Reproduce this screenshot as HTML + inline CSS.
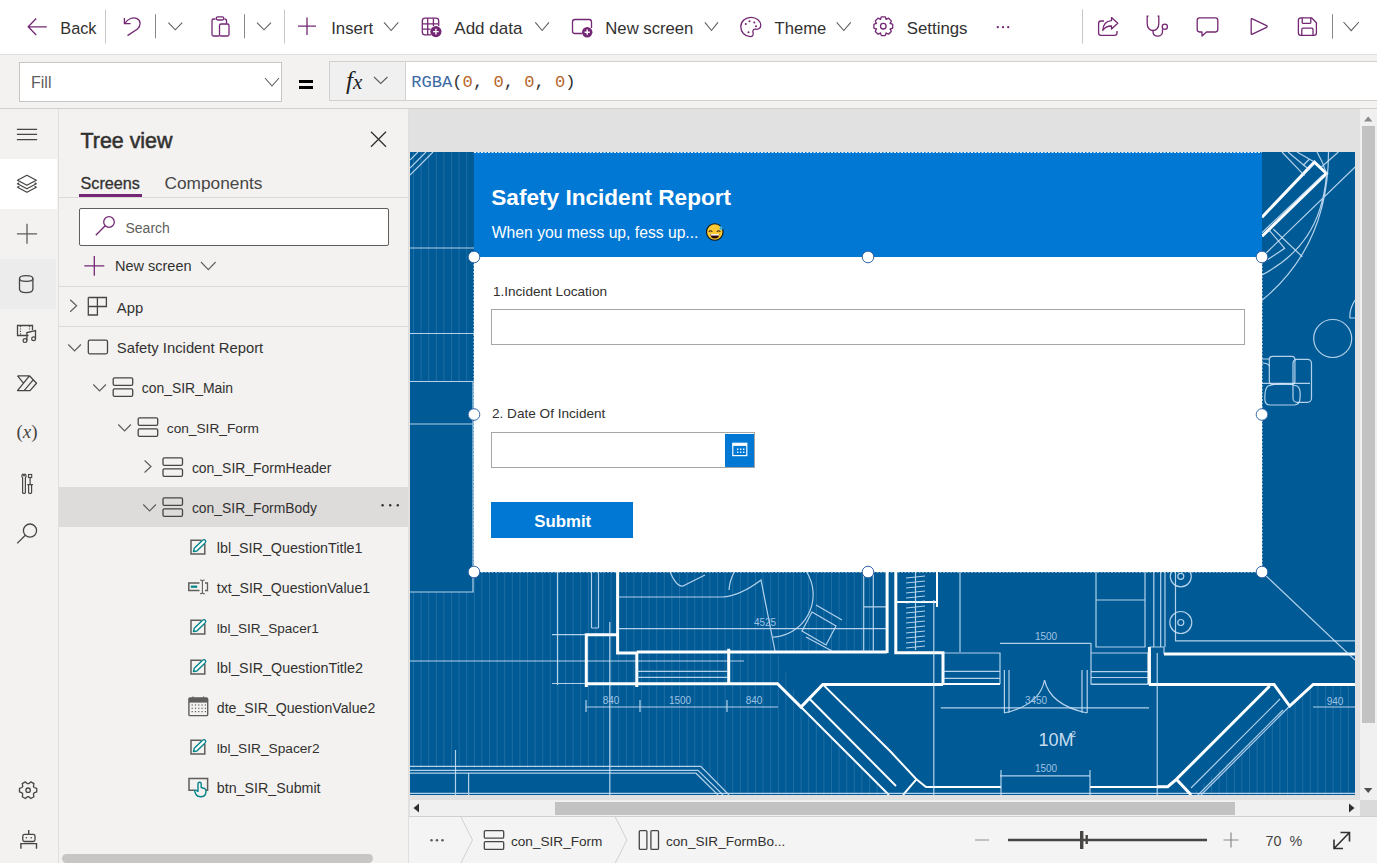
<!DOCTYPE html>
<html><head><meta charset="utf-8">
<style>
*{box-sizing:border-box}
html,body{margin:0;padding:0}
body{width:1377px;height:863px;overflow:hidden;position:relative;background:#fff;font-family:"Liberation Sans",sans-serif;color:#323130}
.a{position:absolute}
.t{position:absolute;white-space:nowrap;line-height:1}
svg.o{position:absolute;left:0;top:0;overflow:visible}
</style></head><body>

<div class="a" style="left:0px;top:0px;width:1377px;height:54px;background:#fff;"></div>
<div class="a" style="left:0px;top:54px;width:1377px;height:1px;background:#e1dfdd;"></div>
<svg class="o" width="1377" height="55"><path d="M28.5 26.8 H46.8 M36.2 18.5 L28.2 26.8 L36.2 35" fill="none" stroke="#742774" stroke-width="1.3"/><path d="M105.5 9.5 V43.5" stroke="#c8c6c4" stroke-width="1"/><path d="M124.4 18 V23.6 H130.6" fill="none" stroke="#742774" stroke-width="1.3"/><path d="M124.8 23.4 C128 18.5 133 16.8 137 18.6 C141 20.5 141 25.5 137.5 29 L127.5 35.6" fill="none" stroke="#742774" stroke-width="1.3"/><path d="M155.5 14.2 V38.3" stroke="#8a8886" stroke-width="1"/><path d="M168.4 22.7 L175.3 29.8 L182.2 22.7" fill="none" stroke="#605e5c" stroke-width="1.1"/><path d="M215.5 19 H213.5 Q212 19 212 20.5 V34.5 Q212 36 213.5 36 H219.5" fill="none" stroke="#742774" stroke-width="1.3"/><path d="M224.5 19 Q226.5 19 226.5 21 V23.8" fill="none" stroke="#742774" stroke-width="1.3"/><rect x="216.3" y="16.8" width="7.5" height="3.2" rx="1.5" fill="none" stroke="#742774" stroke-width="1.3"/><rect x="219.5" y="24" width="9.5" height="12" rx="1.5" fill="none" stroke="#742774" stroke-width="1.3"/><path d="M244.5 14.2 V38.3" stroke="#8a8886" stroke-width="1"/><path d="M257 22.7 L264.0 29.8 L271 22.7" fill="none" stroke="#605e5c" stroke-width="1.1"/><path d="M284.5 9.5 V43.5" stroke="#c8c6c4" stroke-width="1"/><path d="M307 17.4 V35 M298 26.2 H316" stroke="#742774" stroke-width="1.3"/><path d="M384 22.4 L391.15 30.5 L398.3 22.4" fill="none" stroke="#605e5c" stroke-width="1.1"/><path d="M431 34.9 H425 Q422.3 34.9 422.3 32 V21 Q422.3 18.2 425 18.2 H436 Q438.7 18.2 438.7 21 V26" fill="none" stroke="#742774" stroke-width="1.3"/><path d="M427.7 18.2 V34.9 M433.4 18.2 V26 M422.3 23.8 H438.7 M422.3 29.1 H430.5" fill="none" stroke="#742774" stroke-width="1.3"/><circle cx="435.9" cy="31.6" r="5.6" fill="#742774"/><path d="M435.9 28.8 V34.4 M433.1 31.6 H438.7" stroke="#fff" stroke-width="1.4"/><path d="M535.3 22.4 L542.15 30.5 L549 22.4" fill="none" stroke="#605e5c" stroke-width="1.1"/><path d="M582 33.5 H575 Q572.5 33.5 572.5 31 V22 Q572.5 19.5 575 19.5 H589 Q591.5 19.5 591.5 22 V28" fill="none" stroke="#742774" stroke-width="1.3"/><circle cx="587.2" cy="32.2" r="5.2" fill="#742774"/><path d="M587.2 29.6 V34.8 M584.6 32.2 H589.8" stroke="#fff" stroke-width="1.4"/><path d="M704.9 22.4 L711.45 30.5 L718 22.4" fill="none" stroke="#605e5c" stroke-width="1.1"/><path d="M751 17.3 C756.5 17.3 760.8 21 760.8 25.3 C760.8 29 757.5 29.5 755.5 29.2 C753.5 29 752.3 30.5 753 32.5 C753.8 35 752.5 36.8 750 36.6 C744.5 36.3 740.8 32 740.8 26.8 C740.8 21.5 745.3 17.3 751 17.3 Z" fill="none" stroke="#742774" stroke-width="1.3"/><circle cx="745.8" cy="24" r="1.05" fill="#742774"/><circle cx="749.5" cy="21.3" r="1.05" fill="#742774"/><circle cx="754.3" cy="22.5" r="1.05" fill="#742774"/><circle cx="756" cy="26.3" r="1.05" fill="#742774"/><circle cx="748.5" cy="32.3" r="1.05" fill="#742774"/><path d="M836.7 22.4 L843.75 30.5 L850.8 22.4" fill="none" stroke="#605e5c" stroke-width="1.1"/><path d="M892.71 24.29 L892.71 28.11 L890.06 29.22 L890.21 28.84 L891.30 31.50 L888.60 34.20 L885.94 33.11 L886.32 32.96 L885.21 35.61 L881.39 35.61 L880.28 32.96 L880.66 33.11 L878.00 34.20 L875.30 31.50 L876.39 28.84 L876.54 29.22 L873.89 28.11 L873.89 24.29 L876.54 23.18 L876.39 23.56 L875.30 20.90 L878.00 18.20 L880.66 19.29 L880.28 19.44 L881.39 16.79 L885.21 16.79 L886.32 19.44 L885.94 19.29 L888.60 18.20 L891.30 20.90 L890.21 23.56 L890.06 23.18Z" fill="none" stroke="#742774" stroke-width="1.3" stroke-linejoin="round"/><circle cx="883.3" cy="26.2" r="2.8" fill="none" stroke="#742774" stroke-width="1.3"/><circle cx="997.8" cy="27.2" r="1.15" fill="#742774"/><circle cx="1003" cy="27.2" r="1.15" fill="#742774"/><circle cx="1008.2" cy="27.2" r="1.15" fill="#742774"/><path d="M1082.5 9.3 V43.6" stroke="#c8c6c4" stroke-width="1"/><path d="M1104 21 H1101 Q1098.6 21 1098.6 23.4 V33 Q1098.6 35.4 1101 35.4 H1114.6 Q1117 35.4 1117 33 V31" fill="none" stroke="#742774" stroke-width="1.3"/><path d="M1111.5 17.6 L1117.8 23.3 L1111.5 29 V26 C1107 26 1104.5 27.5 1102.8 30.5 C1103 24.5 1106.5 21 1111.5 20.6 Z" fill="none" stroke="#742774" stroke-width="1.3" stroke-linejoin="round"/><path d="M1148.5 16.2 H1147.2 V24 C1147.2 28 1150 30.5 1153 30.5 C1156 30.5 1158.8 28 1158.8 24 V16.2 H1157.5" fill="none" stroke="#742774" stroke-width="1.3"/><path d="M1153 30.5 V31.5 C1153 34.3 1155 36.1 1157.8 36.1 C1160.6 36.1 1162.5 34 1162.5 31.5 V29.2" fill="none" stroke="#742774" stroke-width="1.3"/><circle cx="1164.8" cy="26.8" r="2.6" fill="none" stroke="#742774" stroke-width="1.3"/><path d="M1199.5 17.8 H1215.5 Q1217.8 17.8 1217.8 20.2 V29.6 Q1217.8 32 1215.5 32 H1206.5 L1202 36 V32 H1199.5 Q1197.2 32 1197.2 29.6 V20.2 Q1197.2 17.8 1199.5 17.8 Z" fill="none" stroke="#742774" stroke-width="1.3" stroke-linejoin="round"/><path d="M1251.2 19.5 Q1251.2 18.2 1252.4 18.9 L1266.6 25.6 Q1267.8 26.6 1266.6 27.4 L1252.4 34.2 Q1251.2 34.8 1251.2 33.5 Z" fill="none" stroke="#742774" stroke-width="1.3" stroke-linejoin="round"/><path d="M1300.5 17.8 H1311.5 L1316.4 22.7 V33 Q1316.4 35.4 1314 35.4 H1300.8 Q1298.4 35.4 1298.4 33 V20.2 Q1298.4 17.8 1300.8 17.8 Z" fill="none" stroke="#742774" stroke-width="1.3" stroke-linejoin="round"/><path d="M1302.2 17.8 V22.5 Q1302.2 23.3 1303 23.3 H1310 Q1310.8 23.3 1310.8 22.5 V17.8 M1301.8 35.4 V29.5 Q1301.8 28.2 1303 28.2 H1311.8 Q1313 28.2 1313 29.5 V35.4" fill="none" stroke="#742774" stroke-width="1.3"/><path d="M1332.5 14.2 V38.7" stroke="#8a8886" stroke-width="1"/><path d="M1343.5 22 L1351.2 30.6 L1358.9 22" fill="none" stroke="#605e5c" stroke-width="1.1"/></svg>
<div class="a" style="left:0px;top:55px;width:1377px;height:53px;background:#f3f2f1;"></div>
<div class="a" style="left:0px;top:108px;width:1377px;height:1px;background:#d2d0ce;"></div>
<div class="a" style="left:19px;top:62px;width:263px;height:40px;background:#fff;border:1px solid #c8c6c4"></div>
<div class="a" style="left:329px;top:61px;width:77px;height:40px;background:#f0f0f0;border:1px solid #d2d0ce"></div>
<div class="a" style="left:405px;top:61px;width:972px;height:40px;background:#fff;border:1px solid #d2d0ce;border-right:none"></div>
<div class="a" style="left:299px;top:80px;width:14px;height:2.5px;background:#000;"></div>
<div class="a" style="left:299px;top:86px;width:14px;height:2.5px;background:#000;"></div>
<div class="a" style="left:0px;top:109px;width:58px;height:754px;background:#f3f2f1;"></div>
<div class="a" style="left:58px;top:109px;width:1px;height:754px;background:#e1dfdd;"></div>
<div class="a" style="left:0px;top:159px;width:57px;height:50px;background:#fff;"></div>
<div class="a" style="left:0px;top:259px;width:56px;height:50px;background:#ececec;"></div>
<div class="a" style="left:59px;top:109px;width:350px;height:754px;background:#f3f2f1;"></div>
<div class="a" style="left:59px;top:487px;width:350px;height:40px;background:#dedcdb;"></div>
<div class="a" style="left:408px;top:109px;width:1px;height:754px;background:#e1dfdd;"></div>
<div class="a" style="left:79px;top:194px;width:63px;height:3px;background:#742774;"></div>
<div class="a" style="left:59px;top:197px;width:350px;height:1px;background:#dcdad8;"></div>
<div class="a" style="left:79px;top:208px;width:310px;height:38px;background:#fff;border:1px solid #605e5c;border-radius:2px"></div>
<div class="a" style="left:59px;top:286px;width:350px;height:1px;background:#dcdad8;"></div>
<div class="a" style="left:59px;top:326px;width:350px;height:1px;background:#dcdad8;"></div>
<div class="a" style="left:62px;top:854px;width:311px;height:9px;background:#c8c6c4;border-radius:4.5px"></div>
<div class="a" style="left:409px;top:109px;width:968px;height:708px;background:#e1e1e1;"></div>
<svg class="o" width="1377" height="863" style="left:0;top:0"><defs><clipPath id="bpc"><rect x="410" y="152" width="945" height="643"/></clipPath><style>.w3{fill:none;stroke:#fff;stroke-width:3}.w2{fill:none;stroke:#fff;stroke-width:2}.t1{fill:none;stroke:rgba(210,230,250,0.85);stroke-width:1.2}.h{fill:none;stroke:rgba(200,225,250,0.15);stroke-width:1}</style></defs><rect x="410" y="152" width="945" height="643" fill="#005a95"/><g clip-path="url(#bpc)"><clipPath id="hc"><path d="M410 152 H474 V381 H410 Z M410 592 H474 V572 H872 V652 H777 L801 707 L890 795 H725 L700 768 H410 Z M1290 706 L1313 684 H1355 V795 H1191 Z"/></clipPath><path d="M413.5 152 V795 M421.1 152 V795 M428.7 152 V795 M436.3 152 V795 M443.9 152 V795 M451.5 152 V795 M459.1 152 V795 M466.7 152 V795 M474.3 152 V795 M481.9 152 V795 M489.5 152 V795 M497.1 152 V795 M504.7 152 V795 M512.3 152 V795 M519.9 152 V795 M527.5 152 V795 M535.1 152 V795 M542.7 152 V795 M550.3 152 V795 M557.9 152 V795 M565.5 152 V795 M573.1 152 V795 M580.7 152 V795 M588.3 152 V795 M595.9 152 V795 M603.5 152 V795 M611.1 152 V795 M618.7 152 V795 M626.3 152 V795 M633.9 152 V795 M641.5 152 V795 M649.1 152 V795 M656.7 152 V795 M664.3 152 V795 M671.9 152 V795 M679.5 152 V795 M687.1 152 V795 M694.7 152 V795 M702.3 152 V795 M709.9 152 V795 M717.5 152 V795 M725.1 152 V795 M732.7 152 V795 M740.3 152 V795 M747.9 152 V795 M755.5 152 V795 M763.1 152 V795 M770.7 152 V795 M778.3 152 V795 M785.9 152 V795 M793.5 152 V795 M801.1 152 V795 M808.7 152 V795 M816.3 152 V795 M823.9 152 V795 M831.5 152 V795 M839.1 152 V795 M846.7 152 V795 M854.3 152 V795 M861.9 152 V795 M869.5 152 V795 M877.1 152 V795 M884.7 152 V795 M892.3 152 V795 M899.9 152 V795 M907.5 152 V795 M915.1 152 V795 M922.7 152 V795 M930.3 152 V795 M937.9 152 V795 M945.5 152 V795 M953.1 152 V795 M960.7 152 V795 M968.3 152 V795 M975.9 152 V795 M983.5 152 V795 M991.1 152 V795 M998.7 152 V795 M1006.3 152 V795 M1013.9 152 V795 M1021.5 152 V795 M1029.1 152 V795 M1036.7 152 V795 M1044.3 152 V795 M1051.9 152 V795 M1059.5 152 V795 M1067.1 152 V795 M1074.7 152 V795 M1082.3 152 V795 M1089.9 152 V795 M1097.5 152 V795 M1105.1 152 V795 M1112.7 152 V795 M1120.3 152 V795 M1127.9 152 V795 M1135.5 152 V795 M1143.1 152 V795 M1150.7 152 V795 M1158.3 152 V795 M1165.9 152 V795 M1173.5 152 V795 M1181.1 152 V795 M1188.7 152 V795 M1196.3 152 V795 M1203.9 152 V795 M1211.5 152 V795 M1219.1 152 V795 M1226.7 152 V795 M1234.3 152 V795 M1241.9 152 V795 M1249.5 152 V795 M1257.1 152 V795 M1264.7 152 V795 M1272.3 152 V795 M1279.9 152 V795 M1287.5 152 V795 M1295.1 152 V795 M1302.7 152 V795 M1310.3 152 V795 M1317.9 152 V795 M1325.5 152 V795 M1333.1 152 V795 M1340.7 152 V795 M1348.3 152 V795" class="h" clip-path="url(#hc)"/><path d="M410 248 H474 M410 333.5 H474 M410 381.5 H473 V572 M410 424 H473" class="t1"/><path d="M410 160 L418 152 M410 168 L426 152 M410 175 L433 152" class="t1"/><path d="M410 592 H473 V572" class="t1"/><path d="M410 661 H744" class="t1"/><path d="M557.5 572 V685 M552 634.7 H586 M552 683.5 H586" class="t1"/><path d="M586.3 687 V634.7 H617.6 V572 M617.6 634.7 V653 H636.8 V687" class="w3"/><path d="M591.5 572 V628 M598.5 572 V628 M591.5 628 H598.5" class="t1"/><path d="M609.8 622 V795 M618 597 H722 Q740 596 761 580 L775 651 M618 628.6 H886" class="t1"/><path d="M636.8 652.1 H887 M728.7 648.7 V684" class="w3"/><path d="M637 671.3 H728 M637 677.4 H728" class="t1"/><path d="M806.7 572 A42.7 42.7 0 0 1 773 637.2 M734.3 572 A42.7 42.7 0 0 0 729 590" class="t1"/><path d="M863.7 572 V652 M873.3 572 V652 M863.7 606.8 H886" class="t1"/><path d="M812 612 L836 626 L826 645 L802 631 Z M816 605 L842 620 M806 637 L832 651" class="t1"/><path d="M670 572 Q678 590 685 585 L705 575" class="t1"/><path d="M887.1 572 V653 M895.8 572 V652.8 H943 V684" class="w3"/><path d="M937 572 V607 M897 602 H936" class="w2"/><path d="M906 578 L925 576 M906 583 L925 581 M906 588 L925 586 M906 593 L925 591 M906 598 L925 596 M906 603 L925 601 M906 608 L925 606 M906 613 L925 611 M906 618 L925 616 M906 623 L925 621 M906 628 L925 626 M906 633 L925 631 M906 638 L925 636 M906 643 L925 641 M906 648 L925 646 M915.5 572 V650" class="t1"/><path d="M943.4 653 H1000 V684 M943 671.3 H1000 M943 678.3 H1000 M960 572 V652" class="t1"/><path d="M943 684 H1000" class="w2"/><path d="M1000 643.4 H1090.7 M1091 643 V684 H1150 M1091 653 H1150 M1091 684.5 H1149" class="t1"/><path d="M1096 572 V600 H1145 V572 M1096 600 V647 H1145 V600" class="t1"/><path d="M1149.4 647 V684 M1164 653.9 H1355" class="w3"/><path d="M1149.4 647 H1164 V653.9 M1091 671.6 H1149 M1091 677.5 H1149" class="t1"/><path d="M1153.8 572 V647 M1160.7 572 V647 M1165 572 V647 M1175.5 572 V641 M1175 640.8 H1355" class="t1"/><circle cx="1180.8" cy="576.3" r="10.5" class="t1"/><circle cx="1180.8" cy="576.3" r="3" class="t1"/><circle cx="1180.8" cy="622.5" r="11" class="t1"/><circle cx="1180.8" cy="622.5" r="3" class="t1"/><path d="M1262 572 L1355 660" class="t1"/><path d="M586.3 683.8 H777.5 L801 707 L822.8 684.4 H943 M1149 684.4 H1274 L1289.7 706.1 L1313.2 684.4 H1355 M1149 653 V684" class="w3"/><path d="M586 707 H778 M586 700 V712 M640 700 V712 M727 700 V712" class="t1"/><path d="M801 707 L889 795 M809.7 699 L896 786 M822.8 684.4 L890 751 M890 751 L916.4 779.3 L903 795 M916.4 779.3 L926 787 H1001 M1090 787 H1157" class="w2"/><path d="M1001 770 V795 M1090 770 V795" class="t1"/><path d="M410 766.3 H700.8 L729 795 M410 770.3 H698 L723 795 M410 773.2 H696 L718 795" class="t1"/><path d="M455.5 750 V795 M468.6 773 V795 M410 793.3 H1355" class="t1"/><path d="M933.8 600 V795 M940.8 707.9 H1149 M1000 775.9 H1090" class="t1"/><path d="M1004.4 670 V713 M1087.2 670 V713 M1044.5 680 Q1040 705 1004 713 M1044.5 680 Q1050 705 1087 713 M1009 670 V713 M1082 670 V713" class="t1"/><path d="M1157.2 653 V795" class="t1"/><path d="M1269.7 686 L1176.4 779.3 L1191.2 795 M1157 786.7 H1167.7 L1176.4 779.3" class="w3"/><path d="M1289.7 706 L1201 795 M1280 699 L1191 788 M1283 710 L1196 797" class="t1"/><path d="M1313 707 H1355" class="t1"/><path d="M1262 217.2 L1314.4 162.1 L1326.4 173.4 L1262 236.3" class="w3"/><path d="M1262 232.6 L1322.8 175.2" class="t1"/><path d="M1282 152 L1304.5 175.6 M1288 152 L1309 169.5 M1297 152 L1314.4 162.1 M1303 165.5 L1309 159.5 M1307.5 170.5 L1313 165 M1338.4 152 L1321.4 167 M1317 152 Q1323 162 1326.4 173.4" class="t1"/><path d="M1328.5 152 C1328.5 215 1305 265 1262 300.3 M1326.4 176 C1322 225 1300 255 1262 274.9 M1355.6 166.6 L1262 257" class="t1"/><path d="M1269 230 L1284.7 248.3 L1267.7 259.6 M1273.4 229.3 L1302.3 256.8" class="t1"/><circle cx="1332.7" cy="338.5" r="19" class="t1"/><rect x="1269.3" y="356.3" width="25.6" height="28" rx="3" class="t1"/><rect x="1293" y="359.3" width="18.5" height="43" rx="4" class="t1"/><path d="M1268 386 Q1282 381 1297 386 Q1301 388 1300 398 Q1300 405 1294 405 H1270 Q1264.8 405 1264.8 399 Q1264.8 388 1268 386 Z" class="t1" fill="#005a95"/><path d="M1262 359 H1269.3 M1262 383.4 H1310 M1262 363 Q1268 363 1269.3 366" class="t1"/><path d="M1355 300 Q1349 310 1350 318 H1355" class="t1"/><text x="1038.4" y="746.2" font-size="18" fill="#c7dcef" font-family="Liberation Sans" >10M</text><text x="1071" y="737" font-size="9" fill="#c7dcef" font-family="Liberation Sans">2</text><text x="680" y="704" font-size="10" fill="#9fc2e3" font-family="Liberation Sans" text-anchor="middle">1500</text><text x="611" y="704" font-size="10" fill="#9fc2e3" font-family="Liberation Sans" text-anchor="middle">840</text><text x="754" y="704" font-size="10" fill="#9fc2e3" font-family="Liberation Sans" text-anchor="middle">840</text><text x="1046" y="640" font-size="10" fill="#9fc2e3" font-family="Liberation Sans" text-anchor="middle">1500</text><text x="1046" y="772" font-size="10" fill="#9fc2e3" font-family="Liberation Sans" text-anchor="middle">1500</text><text x="1036" y="704" font-size="10" fill="#9fc2e3" font-family="Liberation Sans" text-anchor="middle">3450</text><text x="1335" y="705" font-size="10" fill="#9fc2e3" font-family="Liberation Sans" text-anchor="middle">940</text><text x="765" y="626" font-size="10" fill="#9fc2e3" font-family="Liberation Sans" text-anchor="middle">4525</text></g></svg>
<div class="a" style="left:474px;top:152px;width:788px;height:105px;background:#0078d4;"></div>
<div class="a" style="left:474px;top:257px;width:788px;height:315px;background:#fff;"></div>
<svg class="o" width="1377" height="863"><circle cx="714.8" cy="232" r="8.3" fill="#fcc935" stroke="#111" stroke-width="1.1"/><path d="M708.8 232 Q710.5 229.5 712.3 232 M716.9 232 Q718.6 229.5 720.4 232" stroke="#3a2a10" stroke-width="1.1" fill="none"/><path d="M710.2 234 H719.4 Q719 238.6 714.8 238.6 Q710.6 238.6 710.2 234 Z" fill="#2a0a00"/><rect x="710.6" y="234" width="8.4" height="1.6" fill="#eee"/><path d="M721 225.3 Q723.3 228.3 722.6 229.5 Q721 230.7 719.6 229.3 Q719.2 228 721 225.3 Z" fill="#3cb0e0"/></svg>
<div class="a" style="left:491px;top:309px;width:754px;height:36px;background:#fff;border:1.5px solid #a6a6a6"></div>
<div class="a" style="left:491px;top:432px;width:264px;height:36px;background:#fff;border:1.5px solid #a6a6a6"></div>
<div class="a" style="left:725px;top:433.5px;width:28.5px;height:33px;background:#0078d4;"></div>
<svg class="o" width="1377" height="863"><rect x="732.8" y="443.3" width="14" height="12.3" fill="none" stroke="#fff" stroke-width="1.2"/><rect x="732.8" y="443.3" width="14" height="2.6" fill="#fff"/><rect x="737" y="448.5" width="1.4" height="1.4" fill="#fff"/><rect x="737" y="451.5" width="1.4" height="1.4" fill="#fff"/><rect x="740" y="448.5" width="1.4" height="1.4" fill="#fff"/><rect x="740" y="451.5" width="1.4" height="1.4" fill="#fff"/><rect x="743" y="448.5" width="1.4" height="1.4" fill="#fff"/><rect x="743" y="451.5" width="1.4" height="1.4" fill="#fff"/></svg>
<div class="a" style="left:491px;top:502px;width:142px;height:36px;background:#0078d4;"></div>
<svg class="o" width="1377" height="863"><path d="M474 152.5 H1262 M474 257 V572 H1262 V257" fill="none" stroke="rgba(255,255,255,0.9)" stroke-width="1" stroke-dasharray="2 1.5"/><circle cx="474" cy="257" r="5.8" fill="#fff" stroke="#3468a8" stroke-width="1"/><circle cx="868" cy="257" r="5.8" fill="#fff" stroke="#3468a8" stroke-width="1"/><circle cx="1262" cy="257" r="5.8" fill="#fff" stroke="#3468a8" stroke-width="1"/><circle cx="474" cy="414.5" r="5.8" fill="#fff" stroke="#3468a8" stroke-width="1"/><circle cx="1262" cy="414.5" r="5.8" fill="#fff" stroke="#3468a8" stroke-width="1"/><circle cx="474" cy="572" r="5.8" fill="#fff" stroke="#3468a8" stroke-width="1"/><circle cx="868" cy="572" r="5.8" fill="#fff" stroke="#3468a8" stroke-width="1"/><circle cx="1262" cy="572" r="5.8" fill="#fff" stroke="#3468a8" stroke-width="1"/></svg>
<div class="a" style="left:1360px;top:109px;width:17px;height:691px;background:#f0f0f0;"></div>
<div class="a" style="left:1362px;top:126px;width:13px;height:597px;background:#c2c2c2;"></div>
<div class="a" style="left:410px;top:800px;width:950px;height:16px;background:#f0f0f0;"></div>
<div class="a" style="left:555px;top:802px;width:680px;height:13px;background:#c2c2c2;"></div>
<div class="a" style="left:1360px;top:800px;width:17px;height:16px;background:#dadada;"></div>
<svg class="o" width="1377" height="863"><path d="M1364 121.5 L1368.2 116.5 L1372.4 121.5 Z" fill="#8a8a8a"/><path d="M1364 788 L1368.2 793 L1372.4 788 Z" fill="#505050"/><path d="M413.5 808 L419 803.5 V812.5 Z M1354.5 808 L1349 803.5 V812.5 Z" fill="#303030"/></svg>
<div class="a" style="left:409px;top:816px;width:968px;height:1px;background:#d2d0ce;"></div>
<div class="a" style="left:409px;top:817px;width:968px;height:46px;background:#f4f4f4;"></div>
<svg class="o" width="1377" height="863"><path d="M265 78 L272.0 86 L279 78" fill="none" stroke="#605e5c" stroke-width="1.1"/><path d="M374 77 L380.75 83.5 L387.5 77" fill="none" stroke="#605e5c" stroke-width="1.1"/><path d="M16.9 129.3 H37.1 M16.9 134.4 H37.1 M16.9 139.6 H37.1" stroke="#484644" stroke-width="1.3"/><path d="M26.9 175.3 L36.3 180.3 L26.9 185.3 L17.5 180.3 Z" fill="none" stroke="#484644" stroke-width="1.3" stroke-linejoin="round"/><path d="M19.2 182.8 L17.5 183.8 L26.9 188.8 L36.3 183.8 L34.6 182.8 M19.2 186.3 L17.5 187.3 L26.9 192.3 L36.3 187.3 L34.6 186.3" fill="none" stroke="#484644" stroke-width="1.3" stroke-linejoin="round"/><path d="M27 223.8 V243.7 M16.9 233.8 H37.1" stroke="#605e5c" stroke-width="1.3"/><path d="M19.5 278.5 V289 C19.5 291.2 22.5 292.6 26.2 292.6 C29.9 292.6 32.9 291.2 32.9 289 V278.5" fill="none" stroke="#484644" stroke-width="1.3"/><ellipse cx="26.2" cy="278.5" rx="6.7" ry="2.9" fill="none" stroke="#484644" stroke-width="1.3"/><path d="M28.5 335.5 H17.5 V325.5 H32.5 V330" fill="none" stroke="#484644" stroke-width="1.3"/><path d="M20.5 326 V335 M29.5 326 V330" stroke="#484644" stroke-width="1.1" stroke-dasharray="1.2 1.2"/><path d="M26.9 340.4 V332.5 L35.5 330.5 V338.5" fill="none" stroke="#484644" stroke-width="1.3"/><circle cx="25" cy="340.6" r="1.9" fill="none" stroke="#484644" stroke-width="1.2"/><circle cx="33.6" cy="338.7" r="1.9" fill="none" stroke="#484644" stroke-width="1.2"/><path d="M17.5 375.8 H29.4 L36.5 383.3 L30 390.6 H17.5 L29.4 375.8 M17.5 375.8 L23.5 383.1 M33.2 379.9 L24.1 390.6" fill="none" stroke="#484644" stroke-width="1.3" stroke-linejoin="round"/><path d="M22.6 477.8 C21.5 476.5 21.8 474.4 23.2 474.2 L24 476 L24.8 474.2 C26.2 474.4 26.5 476.5 25.4 477.8 V492.6 Q25.4 493.4 24.6 493.4 H23.4 Q22.6 493.4 22.6 492.6 Z" fill="none" stroke="#484644" stroke-width="1.2" stroke-linejoin="round"/><rect x="28.5" y="474.5" width="3.2" height="3" fill="none" stroke="#484644" stroke-width="1.1"/><path d="M30.1 477.5 V484.4 M27.3 484.6 H32.9 M28.6 484.6 V492.6 Q28.6 493.4 29.4 493.4 H30.8 Q31.6 493.4 31.6 492.6 V484.6" fill="none" stroke="#484644" stroke-width="1.2"/><circle cx="30" cy="530.6" r="6.6" fill="none" stroke="#484644" stroke-width="1.3"/><path d="M25.3 535.3 L17.2 543.4" stroke="#484644" stroke-width="1.3"/><path d="M36.72 788.45 L36.72 791.95 L34.13 792.89 L33.44 794.07 L33.93 796.79 L30.90 798.54 L28.78 796.76 L27.42 796.76 L25.30 798.54 L22.27 796.79 L22.76 794.07 L22.07 792.89 L19.48 791.95 L19.48 788.45 L22.07 787.51 L22.76 786.33 L22.27 783.61 L25.30 781.86 L27.42 783.64 L28.78 783.64 L30.90 781.86 L33.93 783.61 L33.44 786.33 L34.13 787.51Z" fill="none" stroke="#484644" stroke-width="1.3" stroke-linejoin="round"/><circle cx="28.1" cy="790.2" r="2.2" fill="none" stroke="#484644" stroke-width="1.3"/><path d="M28.7 830 V834 M20.9 848.7 V843.6 H36.5 V848.7" fill="none" stroke="#484644" stroke-width="1.4"/><rect x="22.8" y="834.3" width="12.2" height="7.2" rx="1.8" fill="none" stroke="#484644" stroke-width="1.3"/><circle cx="26.4" cy="837.8" r="0.8" fill="#484644"/><circle cx="31.2" cy="837.8" r="0.8" fill="#484644"/><path d="M371 131.8 L386 146.8 M386 131.8 L371 146.8" stroke="#323130" stroke-width="1.3"/><circle cx="109" cy="222" r="5.3" fill="none" stroke="#742774" stroke-width="1.3"/><path d="M105.2 225.8 L95.8 235.3" stroke="#742774" stroke-width="1.3"/><path d="M94.3 256 V275.7 M84.3 265.8 H104.3" stroke="#742774" stroke-width="1.3"/><path d="M201 262 L208.3 269.6 L215.6 262" fill="none" stroke="#605e5c" stroke-width="1.1"/><path d="M70.2 299.7 L76.60000000000001 305.7 L70.2 311.7" fill="none" stroke="#605e5c" stroke-width="1.2"/><path d="M88.3 297.5 H106.4 V306.5 H88.3 M88.3 297.5 V315 H97.4 V297.5" fill="none" stroke="#484644" stroke-width="1.3"/><path d="M68.3 344.5 L74.6 351.0 L80.89999999999999 344.5" fill="none" stroke="#605e5c" stroke-width="1.2"/><rect x="88.3" y="340.2" width="19.2" height="13.6" rx="1.5" fill="none" stroke="#484644" stroke-width="1.3"/><path d="M93.3 384.5 L99.6 391.0 L105.89999999999999 384.5" fill="none" stroke="#605e5c" stroke-width="1.2"/><rect x="113.2" y="377.8" width="19.5" height="7.5" rx="1.3" fill="none" stroke="#484644" stroke-width="1.3"/><rect x="113.2" y="388.8" width="19.5" height="7.6" rx="1.3" fill="none" stroke="#484644" stroke-width="1.3"/><path d="M118.3 424.5 L124.6 431.0 L130.9 424.5" fill="none" stroke="#605e5c" stroke-width="1.2"/><rect x="138.2" y="417.8" width="19.5" height="7.5" rx="1.3" fill="none" stroke="#484644" stroke-width="1.3"/><rect x="138.2" y="428.8" width="19.5" height="7.6" rx="1.3" fill="none" stroke="#484644" stroke-width="1.3"/><path d="M144.6 460.5 L151.0 466.5 L144.6 472.5" fill="none" stroke="#605e5c" stroke-width="1.2"/><rect x="163.0" y="457.8" width="19.5" height="7.5" rx="1.3" fill="none" stroke="#484644" stroke-width="1.3"/><rect x="163.0" y="468.8" width="19.5" height="7.6" rx="1.3" fill="none" stroke="#484644" stroke-width="1.3"/><path d="M143.3 504.5 L149.60000000000002 511.0 L155.9 504.5" fill="none" stroke="#605e5c" stroke-width="1.2"/><rect x="163.0" y="497.8" width="19.5" height="7.5" rx="1.3" fill="none" stroke="#484644" stroke-width="1.3"/><rect x="163.0" y="508.8" width="19.5" height="7.6" rx="1.3" fill="none" stroke="#484644" stroke-width="1.3"/><circle cx="382.6" cy="505.3" r="1.2" fill="#323130"/><circle cx="390.2" cy="505.3" r="1.2" fill="#323130"/><circle cx="397.8" cy="505.3" r="1.2" fill="#323130"/><path d="M201.5 540.2 H191 V554 H204.8 V544" fill="none" stroke="#605e5c" stroke-width="1.5"/><path d="M193.5 551.6 L194.3 548.3 L202.6 540.2 Q203.9 539 205.2 540.3 Q206.3 541.6 205.1 542.9 L196.8 551 Z" fill="#fff" stroke="#038387" stroke-width="1.4" stroke-linejoin="round"/><path d="M199.5 583 H188.8 V590.5 H199.5" fill="none" stroke="#605e5c" stroke-width="1.5"/><path d="M205 583 H207.5 V590.5 H205" fill="none" stroke="#605e5c" stroke-width="1.3"/><path d="M190.8 586.7 H197.2" stroke="#038387" stroke-width="2.2"/><path d="M202.4 580.5 V593.3 M200 580 Q202.4 580 202.4 581.5 Q202.4 580 204.8 580 M200 593.8 Q202.4 593.8 202.4 592.3 Q202.4 593.8 204.8 593.8" fill="none" stroke="#605e5c" stroke-width="1.1"/><path d="M201.5 620.2 H191 V634 H204.8 V624" fill="none" stroke="#605e5c" stroke-width="1.5"/><path d="M193.5 631.6 L194.3 628.3 L202.6 620.2 Q203.9 619 205.2 620.3 Q206.3 621.6 205.1 622.9 L196.8 631 Z" fill="#fff" stroke="#038387" stroke-width="1.4" stroke-linejoin="round"/><path d="M201.5 660.2 H191 V674 H204.8 V664" fill="none" stroke="#605e5c" stroke-width="1.5"/><path d="M193.5 671.6 L194.3 668.3 L202.6 660.2 Q203.9 659 205.2 660.3 Q206.3 661.6 205.1 662.9 L196.8 671 Z" fill="#fff" stroke="#038387" stroke-width="1.4" stroke-linejoin="round"/><rect x="188.9" y="698" width="18.8" height="17.6" rx="1.2" fill="none" stroke="#605e5c" stroke-width="1.4"/><rect x="188.9" y="698" width="18.8" height="4.6" fill="#605e5c"/><path d="M193 696.5 V699.5 M203.6 696.5 V699.5" stroke="#605e5c" stroke-width="1.2"/><rect x="191.6" y="704.4" width="1.2" height="1.2" fill="#605e5c"/><rect x="194.9" y="704.4" width="1.2" height="1.2" fill="#605e5c"/><rect x="198.20000000000002" y="704.4" width="1.2" height="1.2" fill="#605e5c"/><rect x="201.5" y="704.4" width="1.2" height="1.2" fill="#605e5c"/><rect x="204.8" y="704.4" width="1.2" height="1.2" fill="#605e5c"/><rect x="191.6" y="707.6999999999999" width="1.2" height="1.2" fill="#605e5c"/><rect x="194.9" y="707.6999999999999" width="1.2" height="1.2" fill="#605e5c"/><rect x="198.20000000000002" y="707.6999999999999" width="1.2" height="1.2" fill="#605e5c"/><rect x="201.5" y="707.6999999999999" width="1.2" height="1.2" fill="#605e5c"/><rect x="204.8" y="707.6999999999999" width="1.2" height="1.2" fill="#605e5c"/><rect x="191.6" y="711.0" width="1.2" height="1.2" fill="#605e5c"/><rect x="194.9" y="711.0" width="1.2" height="1.2" fill="#605e5c"/><rect x="198.20000000000002" y="711.0" width="1.2" height="1.2" fill="#605e5c"/><rect x="201.5" y="711.0" width="1.2" height="1.2" fill="#605e5c"/><rect x="204.8" y="711.0" width="1.2" height="1.2" fill="#605e5c"/><path d="M201.5 740.2 H191 V754 H204.8 V744" fill="none" stroke="#605e5c" stroke-width="1.5"/><path d="M193.5 751.6 L194.3 748.3 L202.6 740.2 Q203.9 739 205.2 740.3 Q206.3 741.6 205.1 742.9 L196.8 751 Z" fill="#fff" stroke="#038387" stroke-width="1.4" stroke-linejoin="round"/><path d="M195 790.2 H189 V778.5 H207.6 V790.2 H205.5" fill="none" stroke="#605e5c" stroke-width="1.5"/><path d="M198 792 V783.8 Q198 782.2 199.6 782.2 Q201.2 782.2 201.2 783.8 V787.5 L204.5 788.5 Q206.3 789.2 206 791.5 L205.5 794 Q204.5 796.8 201 796.8 Q197 796.8 195.8 794 L194.8 791.5 Q194.4 790 196 790.2 L198 791.3" fill="#f3f2f1" stroke="#038387" stroke-width="1.4" stroke-linejoin="round"/><path d="M461 817 L472.5 840 L461 863 M615.3 817 L626.9 840 L615.3 863" fill="none" stroke="#d0d0d0" stroke-width="1"/><circle cx="431.5" cy="840.2" r="1.3" fill="#605e5c"/><circle cx="437" cy="840.2" r="1.3" fill="#605e5c"/><circle cx="442.5" cy="840.2" r="1.3" fill="#605e5c"/><rect x="484.3" y="830.6" width="19.4" height="7.6" rx="1.2" fill="none" stroke="#484644" stroke-width="1.3"/><rect x="484.3" y="841.6" width="19.4" height="7.8" rx="1.2" fill="none" stroke="#484644" stroke-width="1.3"/><rect x="639.3" y="830.6" width="7.6" height="18.8" rx="1" fill="none" stroke="#484644" stroke-width="1.3"/><rect x="650.9" y="830.6" width="7.6" height="18.8" rx="1" fill="none" stroke="#484644" stroke-width="1.3"/><path d="M975 840 H989" stroke="#a19f9d" stroke-width="1.2"/><path d="M1008 840 H1207" stroke="#484644" stroke-width="2.6"/><rect x="1080" y="831" width="3.4" height="18" fill="#484644"/><rect x="1085.5" y="835" width="2.4" height="9" fill="#484644"/><path d="M1231 832.5 V847.5 M1223.5 840 H1238.5" stroke="#8a8886" stroke-width="1.2"/><path d="M1334 848.5 L1349.5 832.5 M1340.5 832.5 H1349.5 V841.5 M1334 839.5 V848.5 H1343" fill="none" stroke="#323130" stroke-width="1.6"/><text x="60.3" y="34" font-size="16.3" fill="#323130" font-weight="400" font-family="Liberation Sans" >Back</text><text x="331.2" y="34" font-size="16.8" fill="#323130" font-weight="400" font-family="Liberation Sans" >Insert</text><text x="454.3" y="34" font-size="17.0" fill="#323130" font-weight="400" font-family="Liberation Sans" >Add data</text><text x="605.3" y="34" font-size="16.7" fill="#323130" font-weight="400" font-family="Liberation Sans" >New screen</text><text x="774.6" y="34" font-size="16.6" fill="#323130" font-weight="400" font-family="Liberation Sans" >Theme</text><text x="906.8" y="34" font-size="16.8" fill="#323130" font-weight="400" font-family="Liberation Sans" >Settings</text><text x="31.0" y="88" font-size="16" fill="#605e5c" font-weight="400" font-family="Liberation Sans" >Fill</text><text x="411.3" y="87" font-size="17.1" fill="#323130" font-weight="400" font-family="Liberation Mono" xml:space="preserve"><tspan fill="#3c6aa4">RGBA</tspan>(<tspan fill="#b7652b">0</tspan>, <tspan fill="#b7652b">0</tspan>, <tspan fill="#b7652b">0</tspan>, <tspan fill="#b7652b">0</tspan>)</text><text x="346.0" y="89" font-size="25" fill="#201f1e" font-weight="400" font-family="Liberation Serif" font-style="italic">f<tspan font-size="21">x</tspan></text><text x="16.5" y="438" font-size="19" fill="#484644" font-weight="400" font-family="Liberation Serif" >(<tspan font-style="italic">x</tspan>)</text><text x="80.5" y="148" font-size="21.4" fill="#323130" font-weight="400" font-family="Liberation Sans" stroke="#323130" stroke-width="0.55">Tree view</text><text x="80.5" y="189" font-size="16.2" fill="#323130" font-weight="400" font-family="Liberation Sans" stroke="#323130" stroke-width="0.3">Screens</text><text x="164.5" y="189" font-size="17.3" fill="#484644" font-weight="400" font-family="Liberation Sans" >Components</text><text x="125.5" y="233" font-size="14.0" fill="#605e5c" font-weight="400" font-family="Liberation Sans" >Search</text><text x="115.0" y="271" font-size="14.5" fill="#323130" font-weight="400" font-family="Liberation Sans" >New screen</text><text x="116.8" y="313" font-size="14.8" fill="#323130" font-weight="400" font-family="Liberation Sans" >App</text><text x="116.8" y="353" font-size="14.8" fill="#323130" font-weight="400" font-family="Liberation Sans" >Safety Incident Report</text><text x="141.7" y="393" font-size="13.95" fill="#323130" font-weight="400" font-family="Liberation Sans" >con_SIR_Main</text><text x="166.8" y="433" font-size="13.7" fill="#323130" font-weight="400" font-family="Liberation Sans" >con_SIR_Form</text><text x="191.9" y="473" font-size="13.95" fill="#323130" font-weight="400" font-family="Liberation Sans" >con_SIR_FormHeader</text><text x="191.9" y="513" font-size="13.9" fill="#323130" font-weight="400" font-family="Liberation Sans" >con_SIR_FormBody</text><text x="216.8" y="553" font-size="14.3" fill="#323130" font-weight="400" font-family="Liberation Sans" >lbl_SIR_QuestionTitle1</text><text x="216.8" y="593" font-size="14.1" fill="#323130" font-weight="400" font-family="Liberation Sans" >txt_SIR_QuestionValue1</text><text x="216.8" y="633" font-size="13.6" fill="#323130" font-weight="400" font-family="Liberation Sans" >lbl_SIR_Spacer1</text><text x="216.8" y="673" font-size="14.35" fill="#323130" font-weight="400" font-family="Liberation Sans" >lbl_SIR_QuestionTitle2</text><text x="216.8" y="713" font-size="14.15" fill="#323130" font-weight="400" font-family="Liberation Sans" >dte_SIR_QuestionValue2</text><text x="216.8" y="753" font-size="13.7" fill="#323130" font-weight="400" font-family="Liberation Sans" >lbl_SIR_Spacer2</text><text x="216.8" y="793" font-size="14.25" fill="#323130" font-weight="400" font-family="Liberation Sans" >btn_SIR_Submit</text><text x="491.3" y="205" font-size="22.6" fill="#fff" font-weight="700" font-family="Liberation Sans" >Safety Incident Report</text><text x="491.8" y="238" font-size="15.7" fill="#fff" font-weight="400" font-family="Liberation Sans" >When you mess up, fess up...</text><text x="492.9" y="296" font-size="13.6" fill="#323130" font-weight="400" font-family="Liberation Sans" >1.Incident Location</text><text x="492.0" y="418" font-size="13.6" fill="#323130" font-weight="400" font-family="Liberation Sans" >2. Date Of Incident</text><text x="534.3" y="527" font-size="16.8" fill="#fff" font-weight="700" font-family="Liberation Sans" >Submit</text><text x="511.0" y="846" font-size="13.6" fill="#323130" font-weight="400" font-family="Liberation Sans" >con_SIR_Form</text><text x="666.0" y="846" font-size="13.6" fill="#323130" font-weight="400" font-family="Liberation Sans" >con_SIR_FormBo...</text><text x="1265.5" y="846" font-size="14.3" fill="#484644" font-weight="400" font-family="Liberation Sans" >70</text><text x="1289.5" y="846" font-size="14.3" fill="#484644" font-weight="400" font-family="Liberation Sans" >%</text></svg>
</body></html>
